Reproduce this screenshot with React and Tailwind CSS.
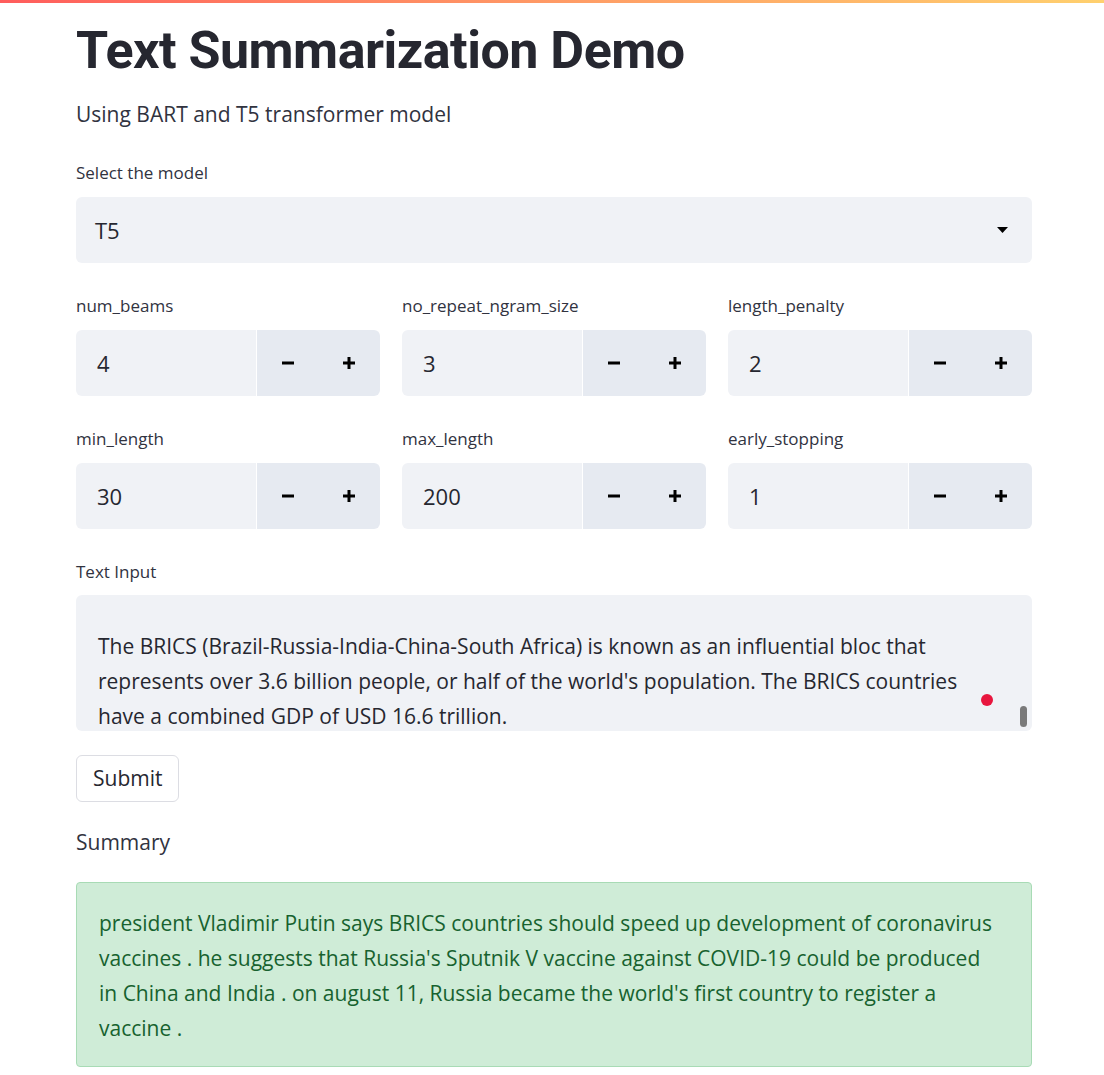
import { useState } from 'react'

const FONT = { fontFamily: '"Open Sans", "Liberation Sans", sans-serif' }
const TITLE_FONT = { fontFamily: 'Roboto, "Liberation Sans", sans-serif' }

const INPUT_TEXT = [
  'The BRICS (Brazil-Russia-India-China-South Africa) is known as an influential bloc that',
  "represents over 3.6 billion people, or half of the world's population. The BRICS countries",
  'have a combined GDP of USD 16.6 trillion.',
]

const SUMMARY = [
  'president Vladimir Putin says BRICS countries should speed up development of coronavirus',
  "vaccines . he suggests that Russia's Sputnik V vaccine against COVID-19 could be produced",
  "in China and India . on august 11, Russia became the world's first country to register a",
  'vaccine .',
]

function Minus() {
  return (
    <svg width="12" height="12" viewBox="0 0 12 12">
      <rect x="0" y="4.5" width="12" height="3" fill="#000" />
    </svg>
  )
}

function Plus() {
  return (
    <svg width="12" height="12" viewBox="0 0 12 12">
      <rect x="0" y="4.5" width="12" height="3" fill="#000" />
      <rect x="4.5" y="0" width="3" height="12" fill="#000" />
    </svg>
  )
}

function NumberInput({ label, value }) {
  const [val, setVal] = useState(value)
  return (
    <div>
      <div className="h-[24px] flex items-center text-[17px] text-[#31333f]">{label}</div>
      <div className="mt-[12px] flex h-[66px]">
        <div className="flex-1 flex items-center pl-[21px] bg-[#f0f2f6] rounded-l-[6px] text-[22px] text-[#262730]">
          {val}
        </div>
        <div className="w-[123px] flex bg-[#e6eaf1] rounded-r-[6px] ml-px">
          <button className="flex-1 flex items-center justify-center" onClick={() => setVal(val - 1)}>
            <Minus />
          </button>
          <button className="flex-1 flex items-center justify-center" onClick={() => setVal(val + 1)}>
            <Plus />
          </button>
        </div>
      </div>
    </div>
  )
}

export default function App() {
  return (
    <div className="min-h-[1075px] bg-white" style={FONT}>
      <div className="h-[3px] bg-linear-to-r from-[#ff5c5c] to-[#ffd06e]" />

      <div className="ml-[76px] w-[956px]">
        {/* Titel */}
        <h1 className="h-[96px] flex items-center text-[52px] font-bold text-[#262730] tracking-[-0.5px]" style={TITLE_FONT}>
          Text Summarization Demo
        </h1>
        <p className="h-[24px] mt-[4px] flex items-center text-[21px] text-[#31333f]">Using BART and T5 transformer model</p>

        {/* Modell */}
        <div className="mt-[34px] h-[24px] flex items-center text-[17px] text-[#31333f]">Select the model</div>
        <div className="mt-[12px] h-[66px] bg-[#f0f2f6] rounded-[6px] flex items-center justify-between pl-[19px] pr-[24px]">
          <span className="text-[22px] text-[#262730]">T5</span>
          <svg width="11" height="7" viewBox="0 0 11 7">
            <polygon points="0,0 11,0 5.5,6" fill="#000" />
          </svg>
        </div>

        {/* Parameter */}
        <div className="mt-[31px] grid grid-cols-3 gap-x-[22px] gap-y-[31px]">
          <NumberInput label="num_beams" value={4} />
          <NumberInput label="no_repeat_ngram_size" value={3} />
          <NumberInput label="length_penalty" value={2} />
          <NumberInput label="min_length" value={30} />
          <NumberInput label="max_length" value={200} />
          <NumberInput label="early_stopping" value={1} />
        </div>

        {/* Eingabe */}
        <div className="mt-[31px] h-[24px] flex items-center text-[17px] text-[#31333f]">Text Input</div>
        <div className="relative mt-[11px] h-[136px] bg-[#f0f2f6] rounded-[6px] overflow-hidden pl-[22px] pt-[34px]">
          {INPUT_TEXT.map((l, i) => (
            <div key={i} className="h-[35px] leading-[35px] whitespace-nowrap text-[21px] text-[#262730]">{l}</div>
          ))}
          <span className="absolute left-[905px] top-[99px] w-[12px] h-[12px] rounded-full bg-[#e8163e]" />
          <span className="absolute right-[5px] bottom-[4px] w-[7px] h-[21px] rounded-full bg-[#7a7a7a]" />
        </div>

        <button className="mt-[24px] h-[47px] px-[16px] bg-white border border-[#dcdde3] rounded-[6px] text-[21px] text-[#262730]">
          Submit
        </button>

        <div className="mt-[27px] h-[28px] flex items-center text-[21px] text-[#31333f]">Summary</div>

        <div className="mt-[25px] h-[185px] bg-[#cfecd7] border border-[#a8dbb5] rounded-[4px] pl-[22px] pt-[23px]">
          {SUMMARY.map((l, i) => (
            <div key={i} className="h-[35px] leading-[35px] whitespace-nowrap text-[21px] text-[#17622f]">{l}</div>
          ))}
        </div>
      </div>
    </div>
  )
}
